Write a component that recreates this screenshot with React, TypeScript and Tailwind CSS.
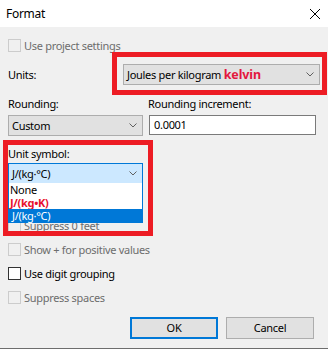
import React from 'react';

const font = { fontFamily: '"Noto Sans", "Open Sans", sans-serif' };

function Chevron() {
  return (
    <svg width="8" height="5" viewBox="0 0 8 5" className="shrink-0">
      <path d="M0.5 0.5 L4 4 L7.5 0.5" fill="none" stroke="#606060" strokeWidth="1" />
    </svg>
  );
}

function Check({ label, disabled }: { label: string; disabled?: boolean }) {
  return (
    <div className="flex items-center gap-[3px] h-[13px]">
      <div
        className={
          disabled
            ? 'w-[13px] h-[13px] border border-[#cccccc] bg-[#f0f0f0] shrink-0'
            : 'w-[13px] h-[13px] border border-[#333333] bg-white shrink-0'
        }
      />
      <span className={disabled ? 'text-[#6d6d6d] leading-[16px]' : 'text-black leading-[16px]'}>{label}</span>
    </div>
  );
}

export default function App() {
  return (
    <div
      className="w-[328px] h-[352px] bg-white relative overflow-hidden text-[11px] tracking-[-0.3px]"
      style={font}
    >
      {/* title bar */}
      <div className="h-[27px] flex items-center justify-between pl-[6px] pr-[8px]">
        <span className="text-black leading-[16px] text-[12px]">Format</span>
        <svg width="10" height="10" viewBox="0 0 10 10">
          <path d="M0 0 L10 10 M10 0 L0 10" stroke="#000" strokeWidth="1" />
        </svg>
      </div>

      {/* body */}
      <div className="bg-[#f0f0f0] h-[322px] px-[8px] pt-[12px] border-b border-[#6d6d6d] flex flex-col">
        <Check label="Use project settings" disabled />

        <div className="flex items-center mt-[12px] h-[21px]">
          <span className="w-[115px] leading-[16px]">Units:</span>
          <div className="w-[197px] h-[21px] bg-[#e1e1e1] border border-[#adadad] flex items-center justify-between pl-[3px] pr-[5px]">
            <span className="leading-[16px]">
              Joules per kilogram{' '}
              <span className="text-[#e3173e] font-bold text-[12.5px] tracking-[-0.1px]">kelvin</span>
            </span>
            <Chevron />
          </div>
        </div>

        <div className="flex mt-[11px]">
          <div className="w-[141px] flex flex-col">
            <span className="leading-[16px]">Rounding:</span>
            <div className="mt-[3px] w-[135px] h-[21px] bg-[#e1e1e1] border border-[#adadad] flex items-center justify-between pl-[3px] pr-[5px]">
              <span className="leading-[16px]">Custom</span>
              <Chevron />
            </div>
          </div>
          <div className="flex flex-col">
            <span className="leading-[16px] -ml-[1px]">Rounding increment:</span>
            <div className="mt-[3px] w-[167px] h-[20px] bg-white border border-[#7a7a7a] flex items-center pl-[4px]">
              <span className="leading-[16px]">0.0001</span>
            </div>
          </div>
        </div>

        <span className="leading-[16px] mt-[10px]">Unit symbol:</span>
        <div className="mt-[1px] w-[135px] h-[21px] bg-[#cce8ff] border border-[#0078d7] flex items-center justify-between pl-[3px] pr-[5px]">
          <span className="leading-[16px]">J/(kg·°C)</span>
          <Chevron />
        </div>

        <div className="mt-[35px]">
          <Check label="Suppress 0 feet" disabled />
        </div>
        <div className="mt-[11px]">
          <Check label="Show + for positive values" disabled />
        </div>
        <div className="mt-[11px]">
          <Check label="Use digit grouping" />
        </div>
        <div className="mt-[11px]">
          <Check label="Suppress spaces" disabled />
        </div>

        <div className="flex justify-end gap-[8px] mt-[13px] pr-[6px]">
          <button className="w-[88px] h-[22px] bg-[#e1e1e1] border-2 border-[#0078d7] leading-[16px]">OK</button>
          <button className="w-[88px] h-[22px] bg-[#e1e1e1] border border-[#adadad] leading-[16px]">Cancel</button>
        </div>
      </div>

      {/* open dropdown list */}
      <div className="absolute left-[8px] top-[183px] w-[135px] h-[40px] bg-white border border-[#0078d7] border-t-0 flex flex-col">
        <div className="h-[13px] flex items-center pl-[1px] leading-[13px]">None</div>
        <div className="h-[13px] flex items-center pl-[1px] leading-[13px] text-[#e8112d] font-bold">J/(kg•K)</div>
        <div className="h-[13px] flex items-center pl-[3px] leading-[13px] bg-[#0078d7] text-white">J/(kg·°C)</div>
      </div>

      {/* red annotation boxes */}
      <div className="absolute left-[112px] top-[52px] w-[215px] h-[43px] border-[5px] border-[#ed1c24]" />
      <div className="absolute left-[3px] top-[140px] w-[150px] h-[96px] border-[5px] border-[#ed1c24]" />
    </div>
  );
}
